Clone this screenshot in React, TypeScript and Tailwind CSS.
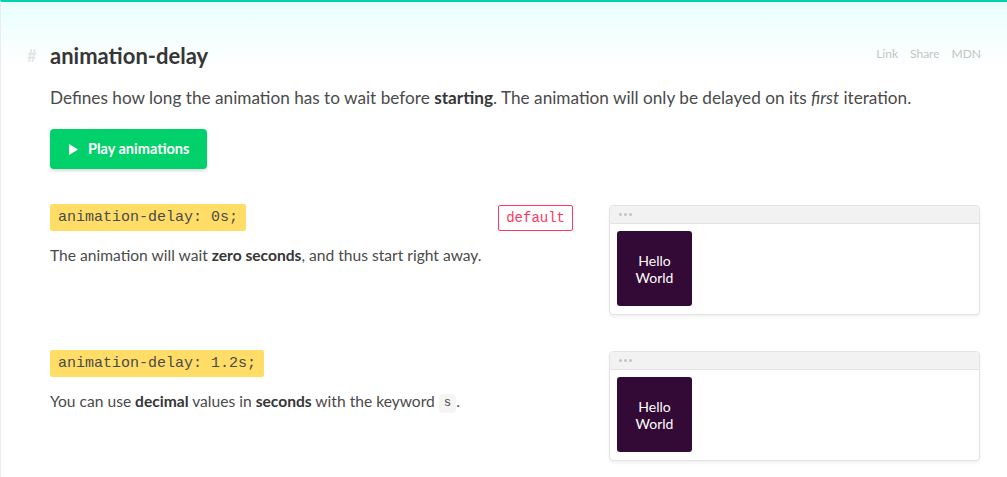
const sans = "font-['Lato','Open_Sans',sans-serif]";
const mono = "font-['Liberation_Mono','DejaVu_Sans_Mono',monospace]";

const examples = [
  {
    code: "animation-delay: 0s;",
    isDefault: true,
    desc: (
      <>
        The animation will wait <strong className="text-[#363636]">zero seconds</strong>, and thus start right away.
      </>
    ),
  },
  {
    code: "animation-delay: 1.2s;",
    isDefault: false,
    desc: (
      <>
        You can use <strong className="text-[#363636]">decimal</strong> values in{" "}
        <strong className="text-[#363636]">seconds</strong> with the keyword{" "}
        <code className={`${mono} inline-block rounded-sm bg-[#f5f5f5] px-[5px] text-[12.5px] leading-[19px] text-[#4a4a4a] align-middle`}>
          s
        </code>
        .
      </>
    ),
  },
];

function Preview() {
  return (
    <div className="w-[371px] rounded-[4px] border border-[#e3e3e3] bg-white shadow-[0_2px_3px_rgba(10,10,10,0.06)]">
      {/* window bar */}
      <div className="flex h-[18px] items-center gap-[2px] border-b border-[#e3e3e3] bg-[#f2f2f2] px-[9px] rounded-t-[4px]">
        <span className="h-[3px] w-[3px] rounded-full bg-[#c4c4c4]" />
        <span className="h-[3px] w-[3px] rounded-full bg-[#c4c4c4]" />
        <span className="h-[3px] w-[3px] rounded-full bg-[#c4c4c4]" />
      </div>
      <div className="px-[7px] pt-[7px] pb-[8px]">
        <div className={`${sans} flex h-[75px] w-[75px] items-center justify-center rounded-[3px] bg-[#330a36] text-center text-[14px] leading-[17px] text-white`}>
          Hello
          <br />
          World
        </div>
      </div>
    </div>
  );
}

export default function App() {
  return (
    <div className={`${sans} min-h-[477px] border-t-2 border-l border-t-[#00d1b2] border-l-[#ececec] bg-white text-[#4a4a4a]`}>
      <div className="bg-gradient-to-b from-[#e8fffc] to-white pt-[41px] pl-[26px] pr-[26px]">
        {/* title */}
        <div className="flex items-center">
          <span className="w-[23px] text-[17px] leading-[26px] text-[#e0e0e0]">#</span>
          <h2 className="text-[22px] font-bold leading-[26px] text-[#363636]">animation-delay</h2>
          <div className="ml-auto mb-[4px] flex gap-[12px] text-[12px] text-[#c4c4c4]">
            <span>Link</span>
            <span>Share</span>
            <span>MDN</span>
          </div>
        </div>
      </div>

      <div className="pl-[49px] pr-[27px]">
        <p className="mt-[16px] text-[17.2px] leading-[26px]">
          Defines how long the animation has to wait before <strong className="text-[#363636]">starting</strong>. The
          animation will only be delayed on its <em>first</em> iteration.
        </p>

        <button className="mt-[18px] flex h-[40px] w-[157px] items-center gap-[9px] rounded-[4px] bg-[#00d16a] pl-[19px] text-[14.5px] font-bold text-white shadow-[0_2px_3px_rgba(10,10,10,0.15)]">
          <svg width="10" height="11" viewBox="0 0 10 11" fill="white">
            <path d="M0 0 L9 5.5 L0 11 Z" />
          </svg>
          Play animations
        </button>

        <div className="mt-[35px] flex flex-col gap-[35px]">
          {examples.map((ex) => (
            <div key={ex.code} className="flex">
              <div className="flex-1 pr-[36px]">
                <div className="flex items-start justify-between">
                  <code className={`${mono} rounded-[2px] bg-[#ffdd67] px-[8px] text-[15px] leading-[27px] text-[#4a4a4a]`}>
                    {ex.code}
                  </code>
                  {ex.isDefault && (
                    <span className={`${mono} mt-[1px] rounded-[2px] border border-[#ff3860] px-[7px] text-[14px] leading-[24px] text-[#ff3860]`}>
                      default
                    </span>
                  )}
                </div>
                <p className="mt-[12px] text-[15.6px] leading-[24px]">{ex.desc}</p>
              </div>
              <div className="mt-[1px]">
                <Preview />
              </div>
            </div>
          ))}
        </div>
      </div>
    </div>
  );
}
